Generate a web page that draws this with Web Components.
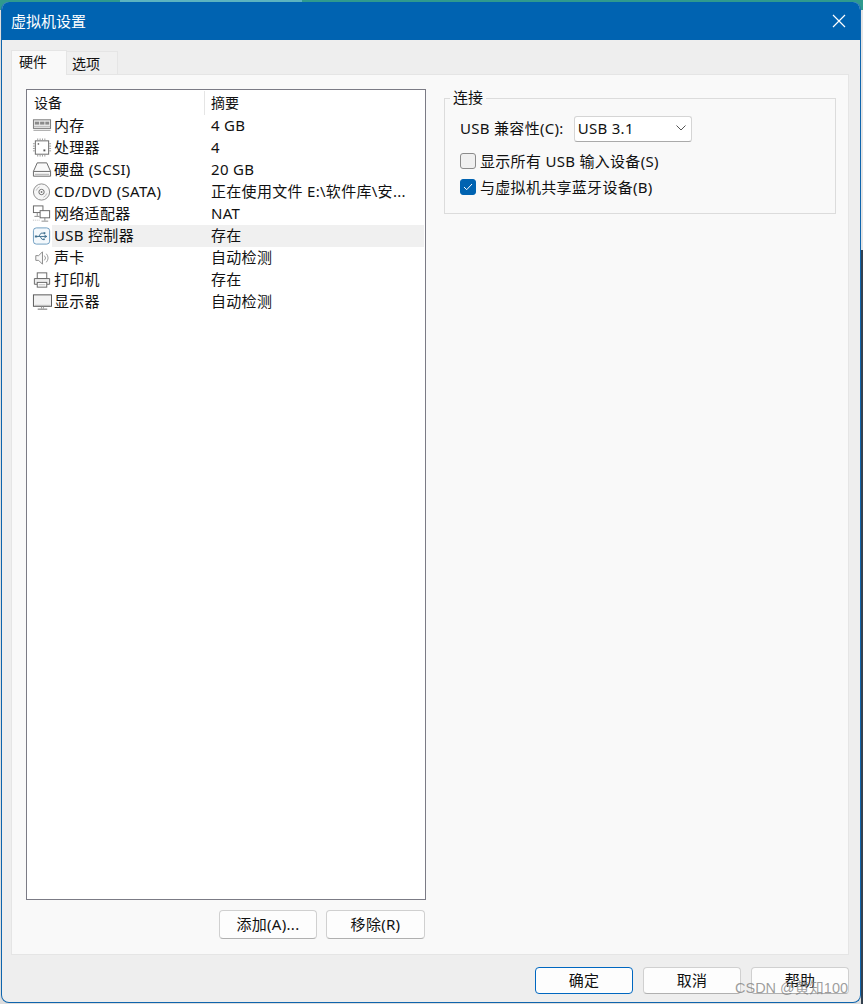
<!DOCTYPE html>
<html lang="zh">
<head>
<meta charset="utf-8">
<title>虚拟机设置</title>
<style>
html, body { margin: 0; padding: 0; height: 100%; }
body {
    font-family: "Noto Sans", "Noto Sans CJK SC", sans-serif;
    font-size: 15px;
    color: #111;
    overflow: hidden;
}
</style>
</head>
<body>
<vm-desktop>
    <vm-dialog heading="虚拟机设置">
        <vm-tabs slot="tabs"></vm-tabs>
        <device-list slot="left">
            <device-row icon="memory" summary="4 GB">内存</device-row>
            <device-row icon="cpu" summary="4">处理器</device-row>
            <device-row icon="disk" summary="20 GB">硬盘 (SCSI)</device-row>
            <device-row icon="cd" summary="正在使用文件 E:\软件库\安...">CD/DVD (SATA)</device-row>
            <device-row icon="net" summary="NAT">网络适配器</device-row>
            <device-row icon="usb" summary="存在" selected>USB 控制器</device-row>
            <device-row icon="sound" summary="自动检测">声卡</device-row>
            <device-row icon="printer" summary="存在">打印机</device-row>
            <device-row icon="display" summary="自动检测">显示器</device-row>
        </device-list>
        <vm-button slot="left-actions">添加(A)...</vm-button>
        <vm-button slot="left-actions" wide>移除(R)</vm-button>
        <usb-group slot="right"></usb-group>
        <vm-button slot="footer" primary>确定</vm-button>
        <vm-button slot="footer">取消</vm-button>
        <vm-button slot="footer">帮助</vm-button>
    </vm-dialog>
    <span slot="mark">CSDN @黄知100</span>
</vm-desktop>

<script>
class VmDesktop extends HTMLElement {
    constructor() {
        super();
        this.attachShadow({ mode: "open" }).innerHTML = `
        <style>
        :host {
            display: block;
            position: relative;
            width: 863px;
            height: 1004px;
            box-sizing: border-box;
            padding: 2px 2px 1px 1px;
            background:
                linear-gradient(90deg, #2f9a8e 0 120px, #5cb4c0 120px 302px, #2f9a8e 302px) top / 100% 10px no-repeat,
                linear-gradient(#e4e4e4 250px, #33414f 250px) right / 2px 100% no-repeat,
                #dedede;
        }
        .mark {
            position: absolute;
            left: 735px;
            top: 976px;
            font: 14.5px "Liberation Sans", "Noto Sans CJK SC", sans-serif;
            color: rgba(120, 120, 120, 0.72);
        }
        </style>
        <slot></slot>
        <div class="mark"><slot name="mark"></slot></div>`;
    }
}

class VmDialog extends HTMLElement {
    constructor() {
        super();
        this.attachShadow({ mode: "open" }).innerHTML = `
        <style>
        :host {
            display: flex;
            flex-direction: column;
            height: 100%;
            box-sizing: border-box;
            background: #eeeeee;
            border-radius: 8px;
            border: 1px solid #0f65ad;
            border-top: none;
            overflow: hidden;
        }
        header {
            height: 38px;
            flex: none;
            display: flex;
            align-items: center;
            justify-content: space-between;
            background: #0063b1;
            color: #fff;
            padding: 0 14px 0 9px;
        }
        header span { font-size: 15px; line-height: 38px; }
        header svg { display: block; }
        .body {
            flex: 1;
            display: flex;
            flex-direction: column;
            padding: 10px 11px 0 9px;
            min-height: 0;
        }
        .panel {
            height: 881px;
            box-sizing: border-box;
            flex: none;
            background: #f9f9f9;
            border: 1px solid #e5e5e5;
            padding: 14px 12px 15px 14px;
            display: grid;
            grid-template-columns: 400px 392px;
            column-gap: 18px;
        }
        .left { display: flex; flex-direction: column; min-height: 0; }
        .right { padding-top: 9px; }
        .actions { flex: none; padding: 10px 1px 0 0; display: flex; justify-content: flex-end; gap: 9px; }
        .footer {
            flex: none;
            display: flex;
            justify-content: flex-end;
            gap: 10px;
            padding-top: 12px;
        }
        .footer ::slotted(vm-button) { height: 27px; line-height: 25px; }
        </style>
        <header>
            <span></span>
            <svg width="14" height="14" viewBox="0 0 14 14"><path d="M1 1 13 13M13 1 1 13" stroke="#fff" stroke-width="1.2" fill="none"/></svg>
        </header>
        <div class="body">
            <slot name="tabs"></slot>
            <div class="panel">
                <div class="left">
                    <slot name="left"></slot>
                    <div class="actions"><slot name="left-actions"></slot></div>
                </div>
                <div class="right"><slot name="right"></slot></div>
            </div>
            <div class="footer"><slot name="footer"></slot></div>
        </div>`;
        this.shadowRoot.querySelector("header span").textContent = this.getAttribute("heading");
    }
}

class VmTabs extends HTMLElement {
    constructor() {
        super();
        this.attachShadow({ mode: "open" }).innerHTML = `
        <style>
        :host {
            display: flex;
            align-items: flex-end;
            height: 24px;
            position: relative;
            z-index: 1;
        }
        div {
            box-sizing: border-box;
            border: 1px solid #e5e5e5;
            border-bottom: none;
            font-size: 14px;
            padding: 0 0 0 7px;
        }
        .on { width: 56px; height: 25px; margin-bottom: -1px; line-height: 21px; background: #f9f9f9; }
        .off { width: 51px; height: 23px; line-height: 24px; border-left: none; padding-left: 5px; background: #f0f0f0; }
        </style>
        <div class="on">硬件</div><div class="off">选项</div>`;
    }
}

class DeviceList extends HTMLElement {
    constructor() {
        super();
        this.attachShadow({ mode: "open" }).innerHTML = `
        <style>
        :host {
            display: block;
            flex: 1;
            box-sizing: border-box;
            height: 811px;
            background: #fff;
            border: 1px solid #7b7b85;
            padding: 1px;
            overflow: hidden;
        }
        .head {
            display: grid;
            grid-template-columns: 176px 1fr;
            height: 24px;
            line-height: 24px;
            font-size: 14px;
        }
        .head span { padding-left: 6px; }
        .head span + span { border-left: 1px solid #e5e5e5; padding-left: 6px; }
        </style>
        <div class="head"><span>设备</span><span>摘要</span></div>
        <slot></slot>`;
    }
}

const ICONS = {
    memory: `<rect x="1.5" y="3.5" width="18" height="9" fill="#e8e8e8" stroke="#777"/><rect x="3" y="5.5" width="4.5" height="3" fill="#8a8a8a"/><rect x="8.5" y="5.5" width="4.5" height="3" fill="#8a8a8a"/><rect x="14" y="5.5" width="4" height="3" fill="#8a8a8a"/><path d="M2 10.5H19" stroke="#bbb"/><path d="M1.5 14.5H19.5" stroke="#999"/>`,
    cpu: `<rect x="3.5" y="2.5" width="14" height="14" fill="#fff" stroke="#666"/><rect x="6" y="5" width="1.5" height="1.5" fill="#555"/><rect x="12" y="11.500" width="2" height="2" fill="#555"/><path d="M6 0v2M8.500 0v2M11 0v2M13.500 0v2M6 17v2M8.500 17v2M11 17v2M13.500 17v2M1 5.500h2M1 8h2M1 10.500h2M1 13h2M18 5.500h2M18 8h2M18 10.500h2M18 13h2" stroke="#999" fill="none"/>`,
    disk: `<path d="M5.500 2.500H15.500L19.500 11.500V16.500H1.500V11.500Z" fill="#fafafa" stroke="#666"/><path d="M1.500 11.500H19.500" stroke="#666"/><path d="M3 14.500H18" stroke="#aaa"/>`,
    cd: `<circle cx="10" cy="10" r="8.500" fill="#f6f6f6" stroke="#8a8a8a"/><circle cx="10" cy="10" r="2.800" fill="#fff" stroke="#666"/><circle cx="10" cy="10" r="1" fill="#777"/><path d="M4.500 8.500a6 6 0 0 1 3.500-4" stroke="#bbb" fill="none"/><path d="M15.500 11.500a6 6 0 0 1-3.500 4" stroke="#bbb" fill="none"/>`,
    net: `<rect x="1.500" y="1.500" width="10" height="7" fill="#fff" stroke="#666"/><rect x="8.500" y="6.500" width="10" height="7.500" fill="#fff" stroke="#666"/><path d="M13.500 14V17M10 17.500H17M5.500 8.500V12M2.500 12.500H8" stroke="#888" fill="none"/><path d="M1 16.500H8" stroke="#bbb" stroke-dasharray="1 1"/>`,
    usb: `<rect x="1.500" y="1.500" width="17" height="17" rx="3" fill="#f3f8fc" stroke="#6d9cc0"/><path d="M4.500 10.500H15.500M15.500 10.500L13 9M15.500 10.500L13 12M7 10.500L9.500 7H12M8.500 10.500L10.500 13.500H12" stroke="#40708f" fill="none"/><rect x="3" y="9.500" width="2.500" height="2" fill="#40708f"/><rect x="12" y="6" width="2" height="2" fill="#40708f"/><circle cx="12.500" cy="13.500" r="1" fill="#40708f"/>`,
    sound: `<path d="M4 7.500H7L11 3.500V16.500L7 12.500H4Z" fill="#f8f8f8" stroke="#888"/><path d="M13 7.500a3.500 3.500 0 0 1 0 5M15 5.500a7 7 0 0 1 0 9" stroke="#999" fill="none"/>`,
    printer: `<rect x="5.500" y="2.500" width="10" height="6" fill="#fff" stroke="#666"/><path d="M5.500 14.500H2.500V8.500H18.500V14.500H15.500" fill="#eee" stroke="#666"/><rect x="5.500" y="12.500" width="10" height="5" fill="#fff" stroke="#666"/><path d="M7 15H14" stroke="#bbb"/>`,
    display: `<rect x="1.500" y="2.500" width="19" height="12" fill="#f2f2f2" stroke="#555"/><path d="M3 13.500H19" stroke="#bbb"/><path d="M6 17.500H16" stroke="#666"/><path d="M10 15V17M12 15V17" stroke="#999"/>`,
};

class DeviceRow extends HTMLElement {
    constructor() {
        super();
        this.attachShadow({ mode: "open" }).innerHTML = `
        <style>
        :host {
            display: grid;
            grid-template-columns: 24px 157px 1fr;
            height: 22px;
            line-height: 20px;
            font-size: 15px;
            letter-spacing: 0.3px;
        }
        .icon { padding-left: 4px; display: flex; align-items: center; }
        .name, .summary { background: var(--row-bg, transparent); white-space: nowrap; overflow: hidden; }
        .name, .summary { padding-left: 2px; }
        :host([selected]) { --row-bg: #f0f0f0; }
        </style>
        <div class="icon"><svg width="21" height="20" viewBox="0 0 21 20"></svg></div>
        <div class="name"><slot></slot></div>
        <div class="summary"></div>`;
        this.shadowRoot.querySelector("svg").innerHTML = ICONS[this.getAttribute("icon")] || "";
        this.shadowRoot.querySelector(".summary").textContent = this.getAttribute("summary");
    }
}

class VmButton extends HTMLElement {
    constructor() {
        super();
        this.attachShadow({ mode: "open" }).innerHTML = `
        <style>
        :host {
            display: inline-block;
            box-sizing: border-box;
            width: 98px;
            height: 29px;
            line-height: 27px;
            text-align: center;
            background: #fdfdfd;
            border: 1px solid #d0d0d0;
            border-bottom-color: #b0b0b0;
            border-radius: 4px;
            font-size: 15px;
            letter-spacing: 0.3px;
        }
        :host([wide]) { width: 99px; }
        :host([primary]) { border: 1.500px solid #0067c0; }
        </style>
        <slot></slot>`;
    }
}

class UsbGroup extends HTMLElement {
    constructor() {
        super();
        this.attachShadow({ mode: "open" }).innerHTML = `
        <style>
        :host {
            display: block;
            position: relative;
            box-sizing: border-box;
            height: 116px;
            border: 1px solid #dcdcdc;
            padding: 17px 15px 0;
            font-size: 15px;
            letter-spacing: 0.3px;
        }
        .legend {
            position: absolute;
            left: 5px;
            top: -12px;
            padding: 0 3px;
            line-height: 20px;
            background: #f9f9f9;
            font-size: 15px;
            letter-spacing: 0;
        }
        .line { display: flex; align-items: center; gap: 10px; height: 26px; margin-bottom: 6px; }
        .line > span { padding-bottom: 3px; }
        .select {
            box-sizing: border-box;
            width: 118px;
            height: 26px;
            line-height: 22px;
            padding: 0 3px;
            background: #fff;
            border: 1px solid #d5d5d5;
            border-bottom-color: #aaa;
            border-radius: 3px;
            display: flex;
            justify-content: space-between;
            align-items: flex-start;
        }
        .select svg { margin: 8px 2px 0 0; }
        .check { display: flex; align-items: center; gap: 4px; height: 26px; }
        .check > span:last-child { padding-bottom: 2px; }
        .box {
            box-sizing: border-box;
            width: 16px;
            height: 16px;
            border-radius: 3px;
            border: 1px solid #8b8b8b;
            background: #f0f0f0;
            display: flex;
            align-items: center;
            justify-content: center;
        }
        .box.on { background: #0063b1; border-color: #0063b1; }
        </style>
        <div class="legend">连接</div>
        <div class="line">
            <span>USB 兼容性(C):</span>
            <div class="select"><span>USB 3.1</span>
                <svg width="10" height="6" viewBox="0 0 10 6"><path d="M.5.500 5 5 9.500.500" stroke="#555" fill="none"/></svg>
            </div>
        </div>
        <div class="check"><span class="box"></span><span>显示所有 USB 输入设备(S)</span></div>
        <div class="check"><span class="box on"><svg width="10" height="8" viewBox="0 0 10 8"><path d="M1 4 3.700 6.700 9 1" stroke="#fff" fill="none"/></svg></span><span>与虚拟机共享蓝牙设备(B)</span></div>`;
    }
}

customElements.define("vm-desktop", VmDesktop);
customElements.define("vm-dialog", VmDialog);
customElements.define("vm-tabs", VmTabs);
customElements.define("device-list", DeviceList);
customElements.define("device-row", DeviceRow);
customElements.define("vm-button", VmButton);
customElements.define("usb-group", UsbGroup);
</script>
</body>
</html>
